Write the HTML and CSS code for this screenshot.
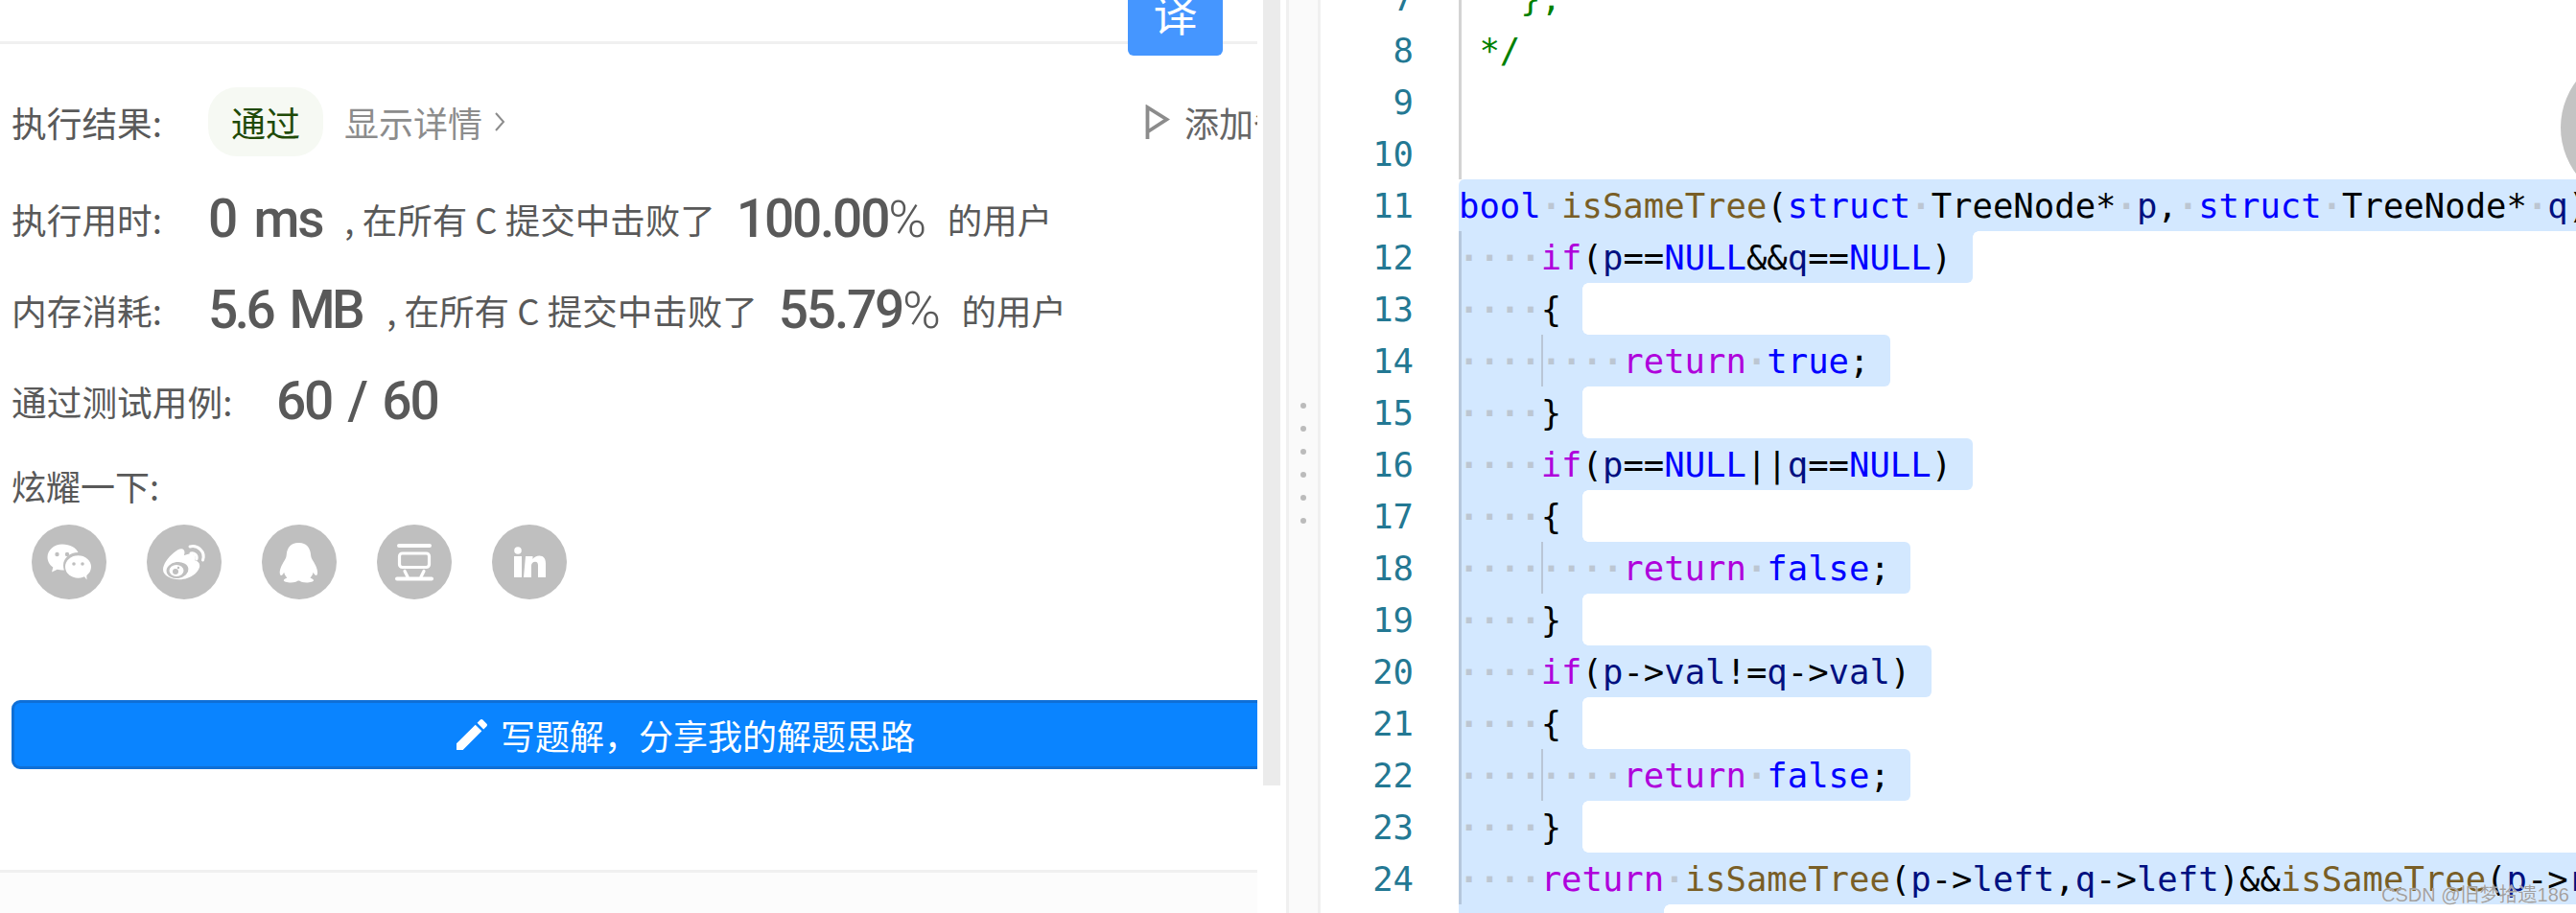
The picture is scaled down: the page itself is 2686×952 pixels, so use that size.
FILE: index.html
```html
<!DOCTYPE html>
<html lang="zh">
<head>
<meta charset="utf-8">
<title>提交结果</title>
<link rel="stylesheet" href="styles.css">
</head>
<body>
<main class="app">
  <section class="result">
    <header class="result-top">
      <div class="translate">译</div>
    </header>
    <div class="row status">
      <span class="label">执行结果:</span>
      <span class="pill">通过</span>
      <span class="details">显示详情</span>
      <svg class="chev" viewBox="0 0 12 24"><path d="M2 3l8 9-8 9" fill="none" stroke="#8c8c8c" stroke-width="2"/></svg>
      <svg class="flag" viewBox="0 0 26 36"><path d="M2.500 36V3l20 12.500-20 13" fill="none" stroke="#8c8c8c" stroke-width="3.800"/></svg>
      <span class="note">添加备注</span>
    </div>
    <div class="row">
      <span class="label">执行用时:</span>
      <span class="num">0 ms</span>
      <span class="text a">, 在所有 C 提交中击败了</span>
      <span class="num pct">100.00<small>%</small></span>
      <span class="text b">的用户</span>
    </div>
    <div class="row">
      <span class="label">内存消耗:</span>
      <span class="num mem">5.6 MB</span>
      <span class="text a wider">, 在所有 C 提交中击败了</span>
      <span class="num pct">55.79<small>%</small></span>
      <span class="text b">的用户</span>
    </div>
    <div class="row">
      <span class="label wide">通过测试用例:</span>
      <span class="num tests">60 / 60</span>
    </div>
    <div class="row share-title">炫耀一下:</div>
    <div class="share">
      <a class="social"><svg viewBox="0 0 78 78"><path d="M32 20.500c-8.600 0-15.500 6-15.500 13.500 0 4.300 2.300 8.100 5.800 10.500l-1.300 5 5.700-2.800c1.700.5 3.500.8 5.300.8.600 0 1.300 0 1.900-.1-.6-1.500-.9-3.100-.9-4.700 0-7.500 6.800-13.500 15.500-13.600C46.700 24.400 40 20.500 32 20.500z" fill="#fff"/><ellipse cx="48.500" cy="44" rx="13.500" ry="11.800" fill="#fff"/><path d="M54 53l3.500 4.500-.3-7z" fill="#fff"/><circle cx="26.500" cy="31" r="2.200" fill="#bfbfbf"/><circle cx="37" cy="31" r="2.200" fill="#bfbfbf"/><circle cx="44" cy="41" r="1.800" fill="#bfbfbf"/><circle cx="53" cy="41" r="1.800" fill="#bfbfbf"/></svg></a>
      <a class="social"><svg viewBox="0 0 78 78"><path d="M17 47c0-5.500 5-12.500 11-17.500 4.500-3.800 8.500-5.300 10.500-3.300 1.300 1.300 1.200 3.500.3 6 6-2.500 10.500-2 11.700 1 .5 1.300.3 2.600-.3 4 3 .8 5 2.800 5 5.500 0 6-9 14.500-21 14.500-9.500 0-17.200-4.200-17.200-10.200z" fill="#fff"/><ellipse cx="32" cy="47.500" rx="11.500" ry="8.500" fill="#bfbfbf" transform="rotate(-8 32 47.500)"/><ellipse cx="31" cy="48" rx="7.500" ry="6" fill="#fff"/><circle cx="30" cy="49" r="3" fill="#bfbfbf"/><circle cx="33" cy="45" r="1.200" fill="#bfbfbf"/><path d="M45 23c8-2 16.500 5 13.500 14M46 30c3.500-1 7 2 6 6" fill="none" stroke="#fff" stroke-width="3" stroke-linecap="round"/></svg></a>
      <a class="social"><svg viewBox="0 0 78 78"><path d="M39 19c7.500 0 11.500 5.500 12 12 .2 3 1 4.500 2.500 7 2.500 4 5 9 4.500 13-.2 2-1.500 2.700-3 1-.5-.6-1-1.500-1.300-2.300-.7 2.500-1.800 4.300-3.200 5.800 2 .8 3.500 1.800 3.500 2.800 0 1.200-3.500 2.200-7.500 2.200-3.300 0-6-.8-7.500-2-.4 0-.8 0-1.200 0-1.500 1.200-4.200 2-7.500 2-4 0-7.500-1-7.500-2.200 0-1 1.500-2 3.500-2.800-1.400-1.500-2.500-3.300-3.200-5.800-.3.800-.8 1.700-1.300 2.300-1.500 1.700-2.800 1-3-1-.5-4 2-9 4.500-13 1.500-2.500 2.300-4 2.500-7 .5-6.500 4.500-12 12-12z" fill="#fff"/></svg></a>
      <a class="social"><svg viewBox="0 0 78 78"><rect x="21" y="20" width="36" height="4" rx="2" fill="#fff"/><rect x="23.500" y="30" width="31" height="14.500" rx="3" fill="none" stroke="#fff" stroke-width="3.200"/><rect x="19" y="54.500" width="40" height="4" rx="2" fill="#fff"/><path d="M29 48.500l3 6M49 48.500l-3 6" stroke="#fff" stroke-width="3.200" stroke-linecap="round"/></svg></a>
      <a class="social"><svg viewBox="0 0 78 78"><circle cx="27" cy="27" r="3.800" fill="#fff"/><path d="M23 33h8v22h-8zM35 33h7.500v3c1.500-2.300 4-3.600 6.800-3.600 4.700 0 6.700 3 6.700 8V55h-8V42.500c0-2.500-.8-3.800-2.900-3.800-2.500 0-4.100 1.600-4.100 4.300v12h-8z" fill="#fff"/></svg></a>
    </div>
    <button class="write">
      <svg class="pen" viewBox="3 3 18 18"><path d="M3 17.250V21h3.750L17.810 9.940l-3.750-3.750L3 17.250zM20.710 7.040c.39-.39.39-1.020 0-1.410l-2.340-2.340c-.39-.39-1.020-.39-1.410 0l-1.830 1.830 3.750 3.750 1.830-1.830z" fill="#fff"/></svg>
      <span>写题解&#xFF0C;分享我的解题思路</span>
    </button>
    <div class="result-foot"></div>
  </section>

  <div class="scrollbar"></div>

  <div class="splitter">
    <i></i><i></i><i></i><i></i><i></i><i></i>
  </div>

  <section class="editor">
    <div class="line"><span class="ln">7</span><div class="code st"><span class="plain cm">   };</span></div></div>
    <div class="line"><span class="ln">8</span><div class="code st"><span class="plain cm"> */</span></div></div>
    <div class="line"><span class="ln">9</span><div class="code st"></div></div>
    <div class="line"><span class="ln">10</span><div class="code st"></div></div>
    <div class="line"><span class="ln">11</span><div class="code"><span class="sel first"><b class="kw">bool</b><i class="ws">·</i><b class="fn">isSameTree</b>(<b class="kw">struct</b><i class="ws">·</i>TreeNode*<i class="ws">·</i><b class="vr">p</b>,<i class="ws">·</i><b class="kw">struct</b><i class="ws">·</i>TreeNode*<i class="ws">·</i><b class="vr">q</b>){</span></div></div>
    <div class="line"><span class="ln">12</span><div class="code sg"><span class="sel ct rb"><i class="ws">····</i><b class="ctl">if</b>(<b class="vr">p</b>==<b class="kw">NULL</b>&amp;&amp;<b class="vr">q</b>==<b class="kw">NULL</b>)</span></div></div>
    <div class="line"><span class="ln">13</span><div class="code sg"><span class="sel ct cb"><i class="ws">····</i>{</span></div></div>
    <div class="line"><span class="ln">14</span><div class="code sg"><span class="sel rt rb ig"><i class="ws">········</i><b class="ctl">return</b><i class="ws">·</i><b class="kw">true</b>;</span></div></div>
    <div class="line"><span class="ln">15</span><div class="code sg"><span class="sel ct cb"><i class="ws">····</i>}</span></div></div>
    <div class="line"><span class="ln">16</span><div class="code sg"><span class="sel rt rb"><i class="ws">····</i><b class="ctl">if</b>(<b class="vr">p</b>==<b class="kw">NULL</b>||<b class="vr">q</b>==<b class="kw">NULL</b>)</span></div></div>
    <div class="line"><span class="ln">17</span><div class="code sg"><span class="sel ct cb"><i class="ws">····</i>{</span></div></div>
    <div class="line"><span class="ln">18</span><div class="code sg"><span class="sel rt rb ig"><i class="ws">········</i><b class="ctl">return</b><i class="ws">·</i><b class="kw">false</b>;</span></div></div>
    <div class="line"><span class="ln">19</span><div class="code sg"><span class="sel ct cb"><i class="ws">····</i>}</span></div></div>
    <div class="line"><span class="ln">20</span><div class="code sg"><span class="sel rt rb"><i class="ws">····</i><b class="ctl">if</b>(<b class="vr">p</b>-&gt;<b class="vr">val</b>!=<b class="vr">q</b>-&gt;<b class="vr">val</b>)</span></div></div>
    <div class="line"><span class="ln">21</span><div class="code sg"><span class="sel ct cb"><i class="ws">····</i>{</span></div></div>
    <div class="line"><span class="ln">22</span><div class="code sg"><span class="sel rt rb ig"><i class="ws">········</i><b class="ctl">return</b><i class="ws">·</i><b class="kw">false</b>;</span></div></div>
    <div class="line"><span class="ln">23</span><div class="code sg"><span class="sel ct cb"><i class="ws">····</i>}</span></div></div>
    <div class="line"><span class="ln">24</span><div class="code sg"><span class="sel rt"><i class="ws">····</i><b class="ctl">return</b><i class="ws">·</i><b class="fn">isSameTree</b>(<b class="vr">p</b>-&gt;<b class="vr">left</b>,<b class="vr">q</b>-&gt;<b class="vr">left</b>)&amp;&amp;<b class="fn">isSameTree</b>(<b class="vr">p</b>-&gt;<b class="vr">right</b>,<b class="vr">q</b>-&gt;<b class="vr">right</b>);</span></div></div>
    <div class="line"><span class="ln">25</span><div class="code"><span class="sel ct"><i class="ws">·········</i></span></div></div>
    <div class="ball"></div>
    <div class="mark">CSDN @旧梦拾遗186</div>
  </section>
</main>
</body>
</html>
```
FILE: styles.css
```css
* { box-sizing: border-box; }
html, body { margin: 0; height: 100%; overflow: hidden; background: #fff; }
body { font-family: "Noto Sans CJK SC", "Liberation Sans", sans-serif; font-weight: 400; }

.app { display: flex; height: 952px; width: 2686px; overflow: hidden; }

/* left result panel */
.result { position: relative; width: 1311px; flex: none; height: 952px; overflow: hidden; background: linear-gradient(#fff 910px, #fcfcfc 910px); color: #595959; font-size: 36px; }
.result-top { height: 46px; border-bottom: 3px solid #f0f0f0; }
.translate { position: absolute; left: 1176px; top: 0; width: 99px; height: 58px; background: #4596ff; border-radius: 0 0 6px 6px; color: #fff; font-size: 46px; line-height: 24px; text-align: center; overflow: hidden; }

.row { display: flex; align-items: center; height: 60px; margin-top: 35px; padding-left: 12px; white-space: nowrap; }
.row.status { height: 72px; margin-top: 45px; }
.label { width: 205px; flex: none; font-size: 36.700px; }
.label.wide { width: 276px; }
.pill { width: 120px; height: 72px; border-radius: 30px; background: #f6f9f3; color: #1f4a06; display: flex; align-items: center; justify-content: center; flex: none; }
.details { color: #8c8c8c; margin-left: 22px; }
.chev { width: 12px; height: 24px; margin-left: 12px; flex: none; }
.flag { width: 26px; height: 36px; margin-left: 667px; flex: none; }
.note { margin-left: 15px; flex: none; color: #666; }

.num { font-family: Roboto, "Liberation Sans", sans-serif; font-weight: 500; font-size: 55px; letter-spacing: -2.200px; word-spacing: 7px; color: #595959; }
.num.mem { letter-spacing: -3.500px; }
.num small { font-size: 54px; font-weight: 300; letter-spacing: -2.500px; }
.text { font-size: 36.500px; }
.text.a { margin-left: 23px; }
.text.a.wider { margin-left: 26px; }
.pct { margin-left: 22px; }
.text.b { margin-left: 24px; }
.tests { word-spacing: 5px; }

.row.share-title { height: 40px; margin-top: 38px; }
.share { display: flex; gap: 42px; margin-top: 21px; padding-left: 33px; }
.social { width: 78px; height: 78px; border-radius: 50%; background: #bfbfbf; display: block; }
.social svg { display: block; width: 78px; height: 78px; }

.write { display: flex; align-items: center; justify-content: center; gap: 14px; width: 1406px; height: 72px; margin: 105px 0 0 12px; padding: 0; border: 3px solid #0f6fd6; border-radius: 9px; background: #0a84ff; color: #fff; font: inherit; }
.pen { width: 32px; height: 32px; flex: none; }
.result-foot { height: 3px; margin-top: 105px; background: #f0f0f0; }

/* scrollbar + splitter */
.scrollbar { width: 18px; height: 819px; margin-left: 6px; flex: none; background: #ebebeb; }
.splitter { width: 36px; margin-left: 6px; flex: none; height: 952px; background: #fafafa; border-left: 3px solid #f0f0f0; border-right: 3px solid #f0f0f0; display: flex; flex-direction: column; align-items: center; gap: 18px; padding-top: 420px; }
.splitter i { width: 6px; height: 6px; border-radius: 50%; background: #bbb; display: block; }

/* code editor */
.editor { position: relative; isolation: isolate; flex: 1; min-width: 0; height: 952px; overflow: hidden; background: #fff; font-family: "DejaVu Sans Mono", "Liberation Mono", monospace; font-size: 35.600px; color: #000; }
.line { display: flex; height: 54px; line-height: 56px; white-space: pre; position: relative; }
.line:first-child { margin-top: -29px; }
.ln { width: 97px; flex: none; text-align: right; color: #237893; margin-right: 47px; }
.code { flex: 1; min-width: 0; height: 54px; position: relative; }
.code.st::before, .code.sg::before { content: ""; position: absolute; left: 0; top: 0; width: 3px; height: 54px; z-index: 1; }
.code.st::before { background: #d3d3d3; }
.code.sg::before { background: #b5c7dc; }

.plain { display: inline-block; height: 54px; }
.sel { display: inline-block; height: 54px; padding-right: 1ch; background: #d3e8ff; position: relative; vertical-align: top; }
.sel.first { border-top-left-radius: 6px; }
.sel.rt { border-top-right-radius: 6px; }
.sel.rb { border-bottom-right-radius: 6px; }
.sel.ct::before, .sel.cb::after { content: ""; position: absolute; left: 100%; width: 6px; height: 6px; }
.sel.ct::before { top: 0; background: radial-gradient(circle at 100% 100%, transparent 5.500px, #d3e8ff 6px); }
.sel.cb::after { bottom: 0; background: radial-gradient(circle at 100% 0, transparent 5.500px, #d3e8ff 6px); }
.sel.ig::before { content: ""; position: absolute; left: 4ch; top: 0; width: 2px; height: 54px; background: #b9c6d6; }

.kw, .fn, .ctl, .vr { font-weight: 400; }
.kw { color: #0000ff; }
.fn { color: #795e26; }
.ctl { color: #af00db; }
.vr { color: #001080; }
.cm { color: #008000; }
.ws { font-style: normal; color: #bcc6d2; font-weight: 700; }

.ball { position: absolute; left: 1293px; top: 53px; width: 160px; height: 160px; border-radius: 50%; background: #c3c3c3; z-index: -1; }
.mark { position: absolute; left: 1106px; top: 918px; font-family: "Liberation Sans", "Noto Sans CJK SC", sans-serif; font-size: 20px; line-height: 30px; color: #a0a0a0; text-shadow: 0 0 1px #fff; white-space: nowrap; z-index: 2; }
```
